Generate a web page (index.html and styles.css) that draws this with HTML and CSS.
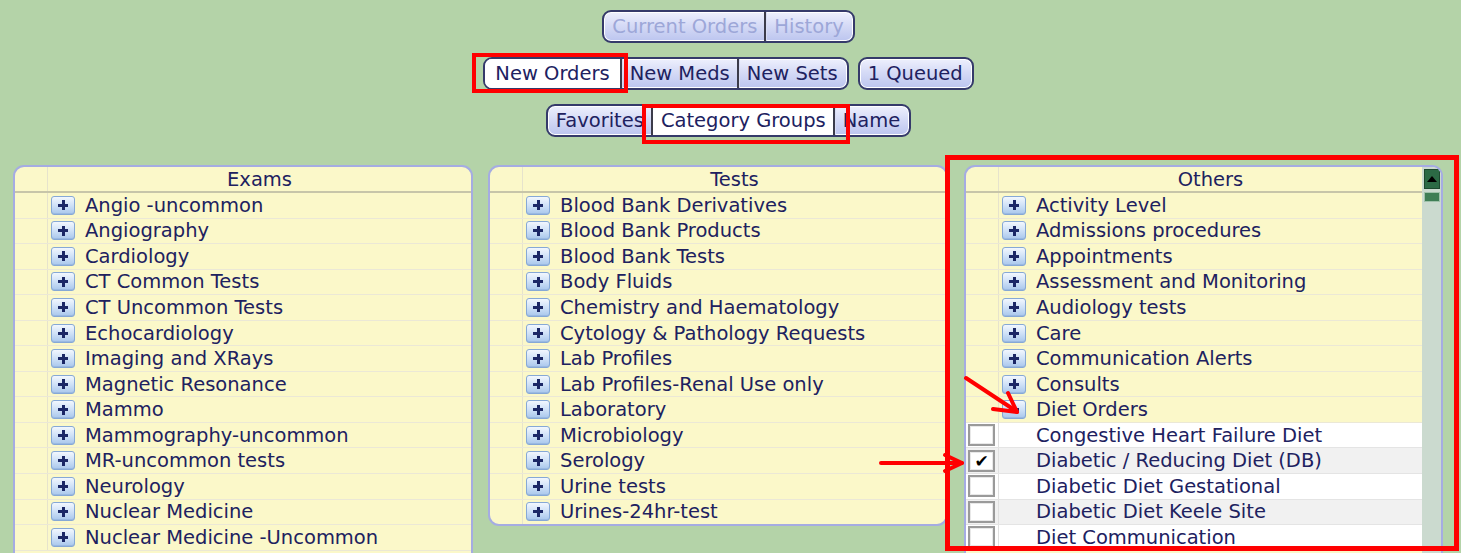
FILE: index.html
```html
<!DOCTYPE html>
<html>
<head>
<meta charset="utf-8">
<link rel="stylesheet" href="styles.css">
</head>
<body>
<div class="page">
  <div class="toolbar">
    <div class="tb-row">
      <div class="seg-group">
        <span class="seg disabled">Current Orders</span><span class="seg disabled">History</span>
      </div>
    </div>
    <div class="tb-row">
      <div class="seg-group">
        <span class="seg sel wide">New Orders</span><span class="seg">New Meds</span><span class="seg">New Sets</span>
      </div>
      <div class="seg-group">
        <span class="seg">1 Queued</span>
      </div>
    </div>
    <div class="tb-row">
      <div class="seg-group">
        <span class="seg">Favorites</span><span class="seg sel">Category Groups</span><span class="seg">Name</span>
      </div>
    </div>
  </div>

  <div class="panels">
    <div class="panel">
      <div class="pbody">
        <div class="phead"><div class="lc"></div><div class="rc">Exams</div></div>
        <div class="prow"><div class="lc"></div><div class="rc"><span class="pm plus"></span>Angio -uncommon</div></div>
        <div class="prow"><div class="lc"></div><div class="rc"><span class="pm plus"></span>Angiography</div></div>
        <div class="prow"><div class="lc"></div><div class="rc"><span class="pm plus"></span>Cardiology</div></div>
        <div class="prow"><div class="lc"></div><div class="rc"><span class="pm plus"></span>CT Common Tests</div></div>
        <div class="prow"><div class="lc"></div><div class="rc"><span class="pm plus"></span>CT Uncommon Tests</div></div>
        <div class="prow"><div class="lc"></div><div class="rc"><span class="pm plus"></span>Echocardiology</div></div>
        <div class="prow"><div class="lc"></div><div class="rc"><span class="pm plus"></span>Imaging and XRays</div></div>
        <div class="prow"><div class="lc"></div><div class="rc"><span class="pm plus"></span>Magnetic Resonance</div></div>
        <div class="prow"><div class="lc"></div><div class="rc"><span class="pm plus"></span>Mammo</div></div>
        <div class="prow"><div class="lc"></div><div class="rc"><span class="pm plus"></span>Mammography-uncommon</div></div>
        <div class="prow"><div class="lc"></div><div class="rc"><span class="pm plus"></span>MR-uncommon tests</div></div>
        <div class="prow"><div class="lc"></div><div class="rc"><span class="pm plus"></span>Neurology</div></div>
        <div class="prow"><div class="lc"></div><div class="rc"><span class="pm plus"></span>Nuclear Medicine</div></div>
        <div class="prow"><div class="lc"></div><div class="rc"><span class="pm plus"></span>Nuclear Medicine -Uncommon</div></div>
      </div>
    </div>

    <div class="panel closed">
      <div class="pbody">
        <div class="phead"><div class="lc"></div><div class="rc">Tests</div></div>
        <div class="prow"><div class="lc"></div><div class="rc"><span class="pm plus"></span>Blood Bank Derivatives</div></div>
        <div class="prow"><div class="lc"></div><div class="rc"><span class="pm plus"></span>Blood Bank Products</div></div>
        <div class="prow"><div class="lc"></div><div class="rc"><span class="pm plus"></span>Blood Bank Tests</div></div>
        <div class="prow"><div class="lc"></div><div class="rc"><span class="pm plus"></span>Body Fluids</div></div>
        <div class="prow"><div class="lc"></div><div class="rc"><span class="pm plus"></span>Chemistry and Haematology</div></div>
        <div class="prow"><div class="lc"></div><div class="rc"><span class="pm plus"></span>Cytology &amp; Pathology Requests</div></div>
        <div class="prow"><div class="lc"></div><div class="rc"><span class="pm plus"></span>Lab Profiles</div></div>
        <div class="prow"><div class="lc"></div><div class="rc"><span class="pm plus"></span>Lab Profiles-Renal Use only</div></div>
        <div class="prow"><div class="lc"></div><div class="rc"><span class="pm plus"></span>Laboratory</div></div>
        <div class="prow"><div class="lc"></div><div class="rc"><span class="pm plus"></span>Microbiology</div></div>
        <div class="prow"><div class="lc"></div><div class="rc"><span class="pm plus"></span>Serology</div></div>
        <div class="prow"><div class="lc"></div><div class="rc"><span class="pm plus"></span>Urine tests</div></div>
        <div class="prow last"><div class="lc"></div><div class="rc"><span class="pm plus"></span>Urines-24hr-test</div></div>
      </div>
    </div>

    <div class="panel others">
      <div class="pbody">
        <div class="phead"><div class="lc"></div><div class="rc">Others</div></div>
        <div class="prow"><div class="lc"></div><div class="rc"><span class="pm plus"></span>Activity Level</div></div>
        <div class="prow"><div class="lc"></div><div class="rc"><span class="pm plus"></span>Admissions procedures</div></div>
        <div class="prow"><div class="lc"></div><div class="rc"><span class="pm plus"></span>Appointments</div></div>
        <div class="prow"><div class="lc"></div><div class="rc"><span class="pm plus"></span>Assessment and Monitoring</div></div>
        <div class="prow"><div class="lc"></div><div class="rc"><span class="pm plus"></span>Audiology tests</div></div>
        <div class="prow"><div class="lc"></div><div class="rc"><span class="pm plus"></span>Care</div></div>
        <div class="prow"><div class="lc"></div><div class="rc"><span class="pm plus"></span>Communication Alerts</div></div>
        <div class="prow"><div class="lc"></div><div class="rc"><span class="pm plus"></span>Consults</div></div>
        <div class="prow"><div class="lc"></div><div class="rc"><span class="pm minus"></span>Diet Orders</div></div>
        <div class="crow"><div class="lc"><span class="cb"></span></div><div class="rc">Congestive Heart Failure Diet</div></div>
        <div class="crow alt"><div class="lc"><span class="cb checked">&#10004;</span></div><div class="rc">Diabetic / Reducing Diet (DB)</div></div>
        <div class="crow"><div class="lc"><span class="cb"></span></div><div class="rc">Diabetic Diet Gestational</div></div>
        <div class="crow alt"><div class="lc"><span class="cb"></span></div><div class="rc">Diabetic Diet Keele Site</div></div>
        <div class="crow"><div class="lc"><span class="cb"></span></div><div class="rc">Diet Communication</div></div>
      </div>
      <div class="scrollbar">
        <div class="sb-up"><span class="tri"></span></div>
        <div class="sb-thumb"></div>
      </div>
    </div>
  </div>

  <div class="hl hl-neworders"></div>
  <div class="hl hl-category"></div>
  <div class="hl hl-others"></div>
  <svg class="arrows" width="1461" height="553" viewBox="0 0 1461 553">
    <g stroke="#ff0000" stroke-width="4" fill="none" stroke-linecap="round">
      <line x1="966" y1="378" x2="1016" y2="411"/>
      <line x1="1017" y1="412" x2="993" y2="409"/>
      <line x1="1017" y1="412" x2="1008" y2="393"/>
      <line x1="881" y1="463" x2="961" y2="463"/>
      <line x1="962" y1="463" x2="945" y2="455"/>
      <line x1="962" y1="463" x2="945" y2="471"/>
    </g>
  </svg>
</div>
</body>
</html>
```

FILE: styles.css
```css
html, body {
  margin: 0;
  padding: 0;
  height: 553px;
  overflow: hidden;
}
body {
  background: #b4d3a8;
  font-family: "DejaVu Sans", Verdana, sans-serif;
  font-size: 19.5px;
  color: #20215f;
}
.page {
  position: relative;
  width: 1461px;
  height: 553px;
  overflow: hidden;
}

/* toolbar */
.toolbar {
  display: flex;
  flex-direction: column;
  align-items: center;
  gap: 14px;
  padding-top: 10px;
  padding-right: 4px;
}
.tb-row {
  display: flex;
  gap: 9px;
  justify-content: center;
}
.seg-group {
  display: flex;
  height: 29px;
  border: 2px solid #353a6a;
  border-radius: 9px;
  background: linear-gradient(#eef0fd 0%, #d6dbf6 45%, #bcc5ef 100%);
  overflow: hidden;
  box-shadow: inset 0 0 0 1px #ffffff;
}
.seg {
  display: flex;
  align-items: center;
  padding: 0 7px 0 8px;
  line-height: 29px;
  white-space: nowrap;
  border-right: 2px solid #3b3b4a;
  box-shadow: 1px 0 0 #d8dcf4;
}
.seg:last-child {
  border-right: none;
  box-shadow: none;
  padding-right: 9px;
}
.seg.wide {
  padding: 0 10px 0 10px;
}
.seg.disabled {
  color: #9da7d8;
}
.seg.sel {
  background: #ffffff;
}

/* panels */
.panels {
  display: flex;
  align-items: flex-start;
  gap: 15px;
  padding: 0 0 0 13px;
  margin-top: 28px;
}
.panel {
  box-sizing: border-box;
  display: flex;
  width: 460px;
  height: 420px;
  border: 2px solid #a5ace2;
  border-bottom: none;
  border-radius: 11px 11px 0 0;
  background: #fbf8c9;
  overflow: hidden;
}
.panel.closed {
  height: 361px;
  border-bottom: 2px solid #a5ace2;
  border-radius: 11px;
}
.panel.others {
  width: 479px;
  margin-left: 1px;
}
.pbody {
  flex: 0 0 456px;
  display: flex;
  flex-direction: column;
}
.phead {
  display: flex;
  height: 24px;
  flex: 0 0 24px;
  border-bottom: 2px solid #c7c5a9;
  line-height: 25px;
}
.phead .rc {
  justify-content: center;
  padding-left: 0;
}
.lc {
  flex: 0 0 32px;
  border-right: 1px solid #e6e3cc;
  display: flex;
  align-items: center;
  justify-content: center;
}
.rc {
  flex: 1;
  display: flex;
  align-items: center;
  padding-left: 3px;
  white-space: nowrap;
}
.prow {
  display: flex;
  height: 24.55px;
  flex: 0 0 24.55px;
  border-bottom: 1px solid #ebe8d6;
}
.prow.last {
  border-bottom: none;
}
.pm {
  position: relative;
  flex: 0 0 auto;
  width: 22px;
  height: 17px;
  margin-right: 10px;
  border: 1px solid #86a8d6;
  border-radius: 3px;
  background: linear-gradient(#f2f7fe 0%, #cfe1f7 50%, #a9c7ec 100%);
  box-shadow: inset 0 -1px 0 #9ab9e2;
}
.pm::before {
  content: "";
  position: absolute;
  left: 6px;
  top: 7px;
  width: 10px;
  height: 3px;
  background: #1b2766;
}
.pm.plus::after {
  content: "";
  position: absolute;
  left: 9.5px;
  top: 3.5px;
  width: 3px;
  height: 10px;
  background: #1b2766;
}

/* checkbox rows */
.crow {
  display: flex;
  height: 24.55px;
  flex: 0 0 24.55px;
  border-bottom: 1px solid #e4e4e4;
  background: #ffffff;
}
.crow.alt {
  background: #f1f1f1;
}
.crow .lc {
  border-right: 1px solid #e0e0e0;
}
.crow .rc {
  padding-left: 37px;
}
.cb {
  width: 23px;
  height: 18px;
  border: 2px solid #9a9a9a;
  background: #ffffff;
  box-shadow: inset 0 0 0 1px #e8e8e8;
  font-size: 17px;
  line-height: 19px;
  text-align: center;
  color: #000000;
  margin-left: -1px;
}

/* scrollbar */
.scrollbar {
  flex: 0 0 19px;
  background: #cbdacf;
  display: flex;
  flex-direction: column;
  align-items: center;
  padding-top: 2px;
}
.sb-up {
  width: 14px;
  height: 18px;
  background: #2c6a45;
  border: 1px solid #1e4a30;
  display: flex;
  justify-content: center;
  align-items: center;
}
.tri {
  width: 0;
  height: 0;
  border-left: 5px solid transparent;
  border-right: 5px solid transparent;
  border-bottom: 6px solid #000000;
}
.sb-thumb {
  margin-top: 3px;
  width: 14px;
  height: 8px;
  background: #3f7e55;
  border: 1px solid #9fc1aa;
}

/* red highlight overlays */
.hl {
  position: absolute;
  border: 4px solid #ff0000;
  box-sizing: border-box;
}
.hl-neworders {
  left: 472px;
  top: 53px;
  width: 156px;
  height: 40px;
}
.hl-category {
  left: 642px;
  top: 104px;
  width: 208px;
  height: 40px;
}
.hl-others {
  left: 945px;
  top: 155px;
  width: 514px;
  height: 396px;
  border-width: 5px;
}
.arrows {
  position: absolute;
  left: 0;
  top: 0;
}
```
